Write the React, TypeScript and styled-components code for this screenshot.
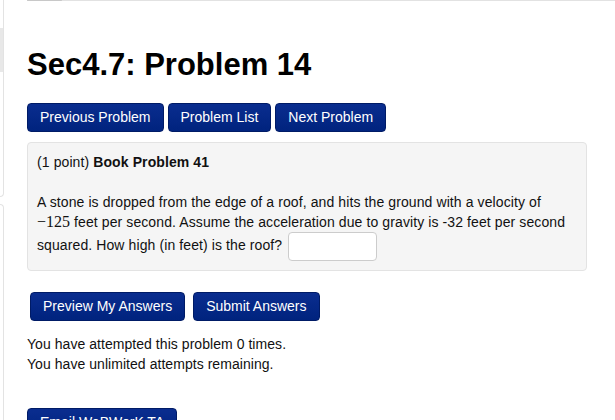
import React from "react";
import styled, { createGlobalStyle } from "styled-components";

const Global = createGlobalStyle`
  html, body { margin: 0; padding: 0; background: #fff; }
  body {
    font-family: "Liberation Sans", Arial, Helvetica, sans-serif;
    font-size: 14px;
    line-height: 20px;
    color: #111;
  }
  * { box-sizing: border-box; }
`;

const Page = styled.div`
  display: flex;
  width: 615px;
  height: 420px;
  overflow: hidden;
`;

const Sidebar = styled.aside`
  width: 4px;
  flex: none;
  display: flex;
  flex-direction: column;
  gap: 7px;
`;

const SidePanel = styled.div<{ $first?: boolean }>`
  border-right: 1px solid #e3e3e3;
  background: #fff;
  ${(p) =>
    p.$first
      ? `height: 197px; border-bottom: 1px solid #e3e3e3; border-bottom-right-radius: 4px; padding-top: 28px;`
      : `flex: 1; border-top: 1px solid #e3e3e3; border-top-right-radius: 4px;`}
`;

const SideActive = styled.div`
  height: 44px;
  background: #e8e8e8;
`;

const Main = styled.main`
  flex: 1;
  padding-left: 23px;
  display: flex;
  flex-direction: column;
  align-items: flex-start;
`;

const TopStrip = styled.div`
  display: flex;
  width: 100%;
  height: 6px;
`;

const TabButton = styled.div`
  width: 35px;
  background: #ececec;
  border: 1px solid #c8c8c8;
  border-top: none;
  border-radius: 0 0 4px 4px;
`;

const TopBar = styled.div`
  flex: 1;
  background: #fafafa;
  border-bottom: 1px solid #e2e2e2;
`;

const Title = styled.h1`
  margin: 46px 0 20px;
  font-size: 31px;
  line-height: 36px;
  font-weight: bold;
  color: #000;
`;

const ButtonRow = styled.div<{ $gap: number; $indent?: number }>`
  display: flex;
  gap: ${(p) => p.$gap}px;
  padding-left: ${(p) => p.$indent ?? 0}px;
`;

const Button = styled.button`
  font-family: "Liberation Sans", Arial, Helvetica, sans-serif;
  font-size: 14px;
  line-height: 19px;
  padding: 4px 12px;
  color: #fff;
  background: linear-gradient(#0a2d8f, #00237e);
  border: 1px solid #001b66;
  border-radius: 4px;
  cursor: pointer;
  white-space: nowrap;
`;

const Well = styled.section`
  margin-top: 10px;
  width: 560px;
  padding: 9px 12px 9px 9px;
  background: #f5f5f5;
  border: 1px solid #e3e3e3;
  border-radius: 4px;
  letter-spacing: 0.1px;
`;

const ProblemHeader = styled.div`
  margin-bottom: 20px;
`;

const ProblemText = styled.p`
  margin: 0;
`;

const Math = styled.span`
  font-family: "Liberation Serif", "Times New Roman", serif;
  font-size: 16px;
  line-height: 19px;
  letter-spacing: 0;
`;

const AnswerInput = styled.input`
  width: 89px;
  height: 29px;
  margin-left: 6px;
  vertical-align: middle;
  background: #fff;
  border: 1px solid #cccccc;
  border-radius: 4px;
  font-size: 14px;
  padding: 4px 6px;
`;

const Actions = styled.div`
  margin-top: 21px;
`;

const Attempts = styled.div`
  margin-top: 13px;
  letter-spacing: 0.05px;
`;

const Footer = styled.div`
  margin-top: 34px;
`;

export default function App() {
  return (
    <>
      <Global />
      <Page>
        <Sidebar>
          <SidePanel $first>
            <SideActive />
          </SidePanel>
          <SidePanel />
        </Sidebar>
        <Main>
          <TopStrip>
            <TabButton />
            <TopBar />
          </TopStrip>
          <Title>Sec4.7: Problem 14</Title>
          <ButtonRow $gap={4}>
            <Button>Previous Problem</Button>
            <Button>Problem List</Button>
            <Button>Next Problem</Button>
          </ButtonRow>
          <Well>
            <ProblemHeader>
              (1 point) <b>Book Problem 41</b>
            </ProblemHeader>
            <ProblemText>
              A stone is dropped from the edge of a roof, and hits the ground with a velocity of{" "}
              <Math>−125</Math> feet per second. Assume the acceleration due to gravity is -32 feet
              per second squared. How high (in feet) is the roof?
              <AnswerInput type="text" aria-label="answer" />
            </ProblemText>
          </Well>
          <Actions>
            <ButtonRow $gap={8} $indent={3}>
              <Button>Preview My Answers</Button>
              <Button>Submit Answers</Button>
            </ButtonRow>
          </Actions>
          <Attempts>
            You have attempted this problem 0 times.
            <br />
            You have unlimited attempts remaining.
          </Attempts>
          <Footer>
            <Button>Email WeBWorK TA</Button>
          </Footer>
        </Main>
      </Page>
    </>
  );
}
